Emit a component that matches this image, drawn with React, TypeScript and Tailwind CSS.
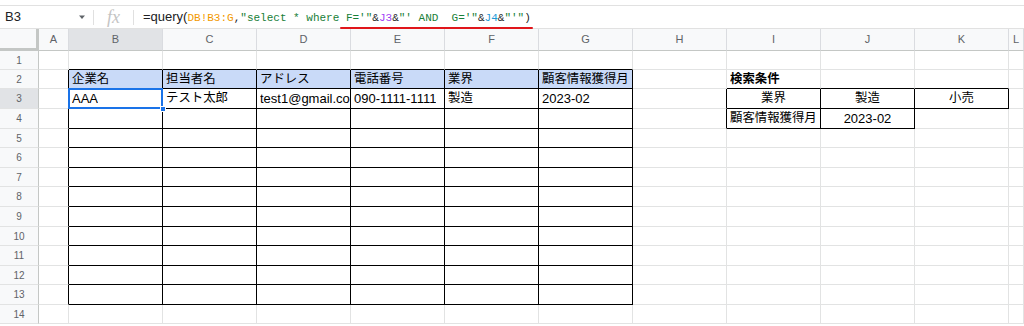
import React from 'react';
import clsx from 'clsx';

const cols = ['A', 'B', 'C', 'D', 'E', 'F', 'G', 'H', 'I', 'J', 'K', 'L'];
const rows = [1, 2, 3, 4, 5, 6, 7, 8, 9, 10, 11, 12, 13, 14];

type Cell = { text: string; center?: boolean; bold?: boolean; head?: boolean };

const cells: Record<string, Cell> = {
  B2: { text: '企業名', head: true },
  C2: { text: '担当者名', head: true },
  D2: { text: 'アドレス', head: true },
  E2: { text: '電話番号', head: true },
  F2: { text: '業界', head: true },
  G2: { text: '顧客情報獲得月', head: true },
  B3: { text: 'AAA' },
  C3: { text: 'テスト太郎' },
  D3: { text: 'test1@gmail.com' },
  E3: { text: '090-1111-1111' },
  F3: { text: '製造' },
  G3: { text: '2023-02' },
  I2: { text: '検索条件', bold: true },
  I3: { text: '業界', center: true },
  J3: { text: '製造', center: true },
  K3: { text: '小売', center: true },
  I4: { text: '顧客情報獲得月' },
  J4: { text: '2023-02', center: true },
};

// c: 1 = A ... 11 = K, 12 = L
const blackRight = (r: number, c: number) =>
  (r >= 2 && r <= 13 && c >= 1 && c <= 7) ||
  (r === 3 && c >= 8 && c <= 11) ||
  (r === 4 && c >= 8 && c <= 10);

const blackBottom = (r: number, c: number) =>
  (c >= 2 && c <= 7 && r >= 1 && r <= 13) ||
  (c >= 9 && c <= 11 && (r === 2 || r === 3)) ||
  (c >= 9 && c <= 10 && r === 4);

const FormulaBar = () => (
  <div className="h-[24px] flex items-center border-y border-[#e1e1e1] bg-white">
    <div className="w-[93px] flex items-center justify-between pl-[5px] pr-[7px]">
      <span className="text-[13px] text-[#202124]">B3</span>
      <svg width="8" height="5" viewBox="0 0 8 5">
        <path d="M1 0.5 L7 0.5 L4 4 Z" fill="#5f6368" />
      </svg>
    </div>
    <div className="w-px h-[15px] bg-[#e0e0e0]" />
    <div className="w-[39px] flex justify-center">
      <span className="text-[18px] italic text-[#c4c4c4] leading-none font-['Liberation_Serif',serif]">fx</span>
    </div>
    <div className="w-px h-[15px] bg-[#e0e0e0]" />
    <div className="pl-[9px] text-[13px] text-[#202124] whitespace-nowrap flex items-baseline">
      <span>=query(</span>
      <span className="font-['Liberation_Mono',monospace] text-[11px]">
        <span className="text-[#f29900]">DB!B3:G</span>
        <span>,</span>
        <span className="text-[#188038]">"select * where </span>
        <span className="relative">
          <span className="text-[#188038]">F='"</span>
          <span>&amp;</span>
          <span className="text-[#a142f4]">J3</span>
          <span>&amp;</span>
          <span className="text-[#188038]">"' AND&nbsp;&nbsp;G='"</span>
          <span>&amp;</span>
          <span className="text-[#1e9bd7]">J4</span>
          <span>&amp;</span>
          <span className="text-[#188038]">"'"</span>
          <span>)</span>
          <span className="absolute left-[-6px] right-[-2px] bottom-[-5px] h-[2px] bg-[#e0161b] rounded-full" />
        </span>
      </span>
    </div>
  </div>
);

const App = () => {
  return (
    <div className="w-[1024px] h-[326px] overflow-hidden bg-white font-['Liberation_Sans','Noto_Sans_CJK_JP',sans-serif]">
      <div className="h-[5px] bg-white" />
      <FormulaBar />
      <div className="grid grid-cols-[39px_30px_repeat(10,94px)_1fr] grid-rows-[22px_19px_19px_20px_20px_19px_20px_19px_20px_20px_19px_20px_19px_20px_19px]">
        {/* header row */}
        <div className="bg-[#f8f9fa] border-r-[3px] border-b-[3px] border-[#c4c7c5]" />
        {cols.map((col) => (
          <div
            key={col}
            className={clsx(
              'flex items-center justify-center text-[11px] text-[#5f6368] border-r border-b border-r-[#dadce0] border-b-[#c4c7c5]',
              col === 'B' ? 'bg-[#e1e3e6]' : 'bg-[#f8f9fa]'
            )}
          >
            {col}
          </div>
        ))}
        {rows.map((r) => (
          <React.Fragment key={r}>
            <div
              className={clsx(
                'flex items-center justify-center text-[10px] text-[#5f6368] border-r border-b border-r-[#c4c7c5] border-b-[#e2e3e3]',
                r === 3 ? 'bg-[#e1e3e6]' : 'bg-[#f8f9fa]'
              )}
            >
              {r}
            </div>
            {cols.map((col, i) => {
              const c = i + 1;
              const cell = cells[col + r];
              const cjk = cell ? /[^\x00-\x7f]/.test(cell.text) : false;
              return (
                <div
                  key={col}
                  className={clsx(
                    'relative flex items-center pl-[3px] whitespace-nowrap border-r border-b text-black',
                    blackRight(r, c) ? 'border-r-black' : 'border-r-[#e2e3e3]',
                    blackBottom(r, c) ? 'border-b-black' : 'border-b-[#e2e3e3]',
                    cell?.head && 'bg-[#c9daf8]',
                    cell?.center && 'justify-center pr-[3px]',
                    cell?.bold && 'font-bold',
                    cjk ? 'text-[12.4px]' : 'text-[13px]'
                  )}
                >
                  {cell && <span className="overflow-hidden">{cell.text}</span>}
                  {col === 'B' && r === 3 && (
                    <>
                      <div className="absolute z-10 left-[-1px] top-[-1px] right-[-1px] bottom-[-1px] border-2 border-[#1a73e8]" />
                      <div className="absolute z-10 right-[-4px] bottom-[-4px] w-[6px] h-[6px] bg-[#1a73e8] border border-white" />
                    </>
                  )}
                </div>
              );
            })}
          </React.Fragment>
        ))}
      </div>
    </div>
  );
};

export default App;
